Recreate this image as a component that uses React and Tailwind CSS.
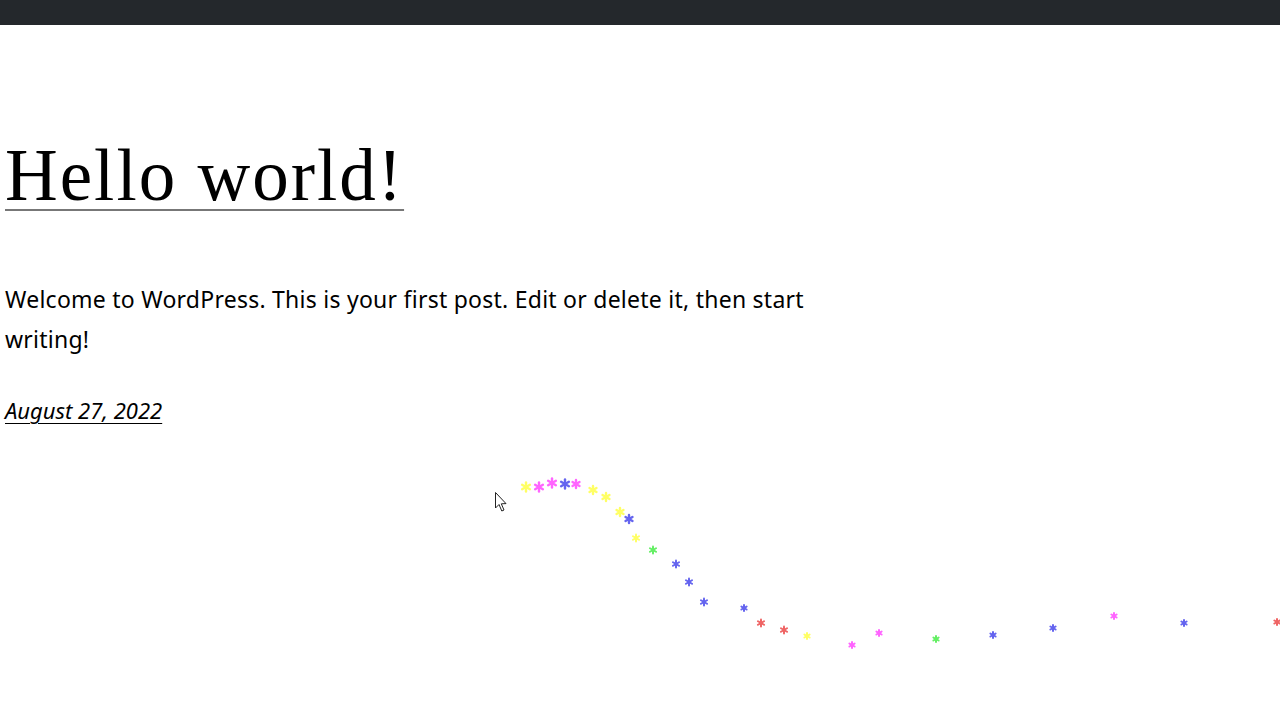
import React from 'react';

// sparkle trail points: x, y, colour, size
const sparkles = [
  [526, 487, '#ffff55', 9],
  [539, 487, '#ff55ff', 9],
  [552, 483, '#ff55ff', 9],
  [565, 484, '#5555ee', 9],
  [576, 484, '#ff55ff', 8],
  [593, 490, '#ffff55', 8],
  [606, 497, '#ffff55', 8],
  [620, 512, '#ffff55', 8],
  [629, 519, '#5555ee', 8],
  [636, 538, '#ffff55', 7],
  [653, 550, '#55ee55', 7],
  [676, 564, '#5555ee', 7],
  [689, 582, '#5555ee', 7],
  [704, 602, '#5555ee', 7],
  [744, 608, '#5555ee', 6],
  [761, 623, '#ee5555', 7],
  [784, 630, '#ee5555', 7],
  [807, 636, '#ffff55', 6],
  [852, 645, '#ff55ff', 6],
  [879, 633, '#ff55ff', 6],
  [936, 639, '#55ee55', 6],
  [993, 635, '#5555ee', 6],
  [1053, 628, '#5555ee', 6],
  [1114, 616, '#ff55ff', 6],
  [1184, 623, '#5555ee', 6],
  [1277, 622, '#ee5555', 6],
];

function Sparkle({ x, y, color, size }) {
  const r = size / 2;
  const lines = [0, 60, 120].map((a) => {
    const rad = (a * Math.PI) / 180;
    const dx = Math.sin(rad) * r;
    const dy = Math.cos(rad) * r;
    return <line key={a} x1={x - dx} y1={y - dy} x2={x + dx} y2={y + dy} />;
  });
  return (
    <g stroke={color} strokeWidth={size > 7 ? 2.4 : 2} strokeLinecap="round" opacity="0.9">
      {lines}
      <circle cx={x} cy={y} r={r * 0.45} fill={color} stroke="none" />
    </g>
  );
}

export default function App() {
  return (
    <div className="relative min-h-[720px] w-full overflow-hidden bg-white text-black">
      {/* admin bar */}
      <div className="h-[25px] w-full bg-[#24282c]" />

      <main className="pl-[5px]">
        <h1 className="mt-[115px] text-[73px] leading-[72px] font-normal tracking-[2px] font-['Liberation_Serif',serif]">
          <a href="#" className="underline decoration-[#777] decoration-[1.5px] underline-offset-[9px]">
            Hello world!
          </a>
        </h1>

        <p className="mt-[67px] max-w-[840px] text-[23px] leading-[40px] font-['Noto_Sans',sans-serif] tracking-[0.25px]">
          Welcome to WordPress. This is your first post. Edit or delete it, then start writing!
        </p>

        <div className="mt-[31px] text-[22px] leading-[40px] font-['Noto_Sans',sans-serif]">
          <a href="#" className="italic underline underline-offset-[4px] decoration-1">
            August 27, 2022
          </a>
        </div>
      </main>

      {/* cursor sparkle trail */}
      <svg className="pointer-events-none absolute left-0 top-0" width="1280" height="720">
        {sparkles.map(([x, y, c, s], i) => (
          <Sparkle key={i} x={x} y={y} color={c} size={s} />
        ))}
        {/* mouse pointer */}
        <path
          d="M495.5 492.5 L495.5 508 L499 504.5 L501.8 511 L504 510 L501.3 503.8 L506 503.6 Z"
          fill="#fff"
          stroke="#222"
          strokeWidth="1"
          strokeLinejoin="round"
        />
      </svg>
    </div>
  );
}
